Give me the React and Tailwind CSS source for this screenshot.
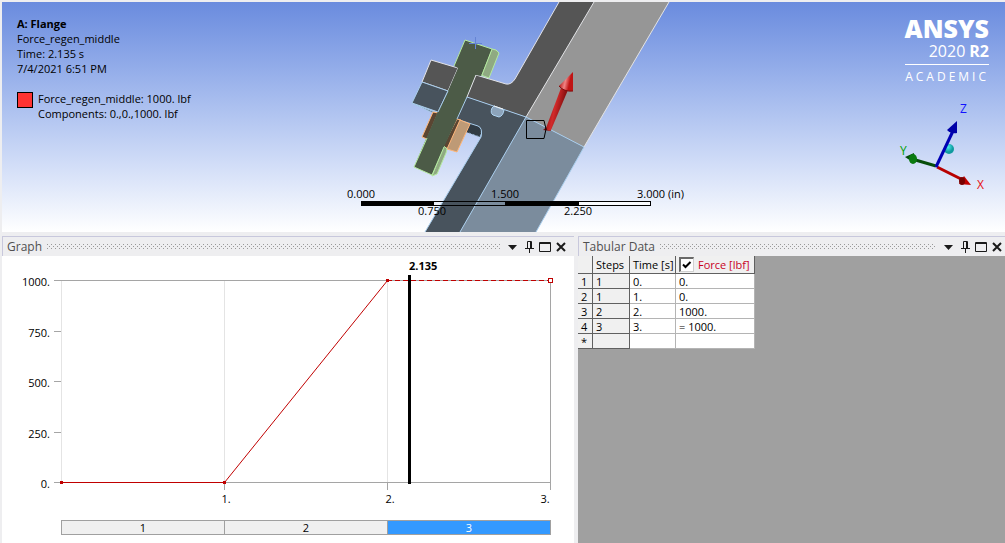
const STEPS = ['1', '2', '3'];
const ACTIVE_STEP = '3';

const ROWS = [
  { step: '1', time: '0.', force: '0.' },
  { step: '1', time: '1.', force: '0.' },
  { step: '2', time: '2.', force: '1000.' },
  { step: '3', time: '3.', force: '= 1000.' },
];

const Y_TICKS = [
  { label: '1000.', y: 281 },
  { label: '750.', y: 332 },
  { label: '500.', y: 382 },
  { label: '250.', y: 433 },
  { label: '0.', y: 483 },
];

const X_TICKS = [
  { label: '1.', x: 224, textX: 226 },
  { label: '2.', x: 387, textX: 390 },
  { label: '3.', x: 550, textX: 545 },
];

function Model() {
  return (
    <g strokeWidth="1" strokeLinejoin="round">
      {/* upper pipe */}
      <path d="M594 2H669L584 147L526 117Z" fill="#969696" />
      <path d="M559 2H594L526 117L467 97L476 75L506 84Q511 85 515 79Z" fill="#555555" />
      <path d="M594 2L526 117M669 2L584 147" stroke="#e4e4e4" fill="none" />
      <path d="M559 2L515 79Q511 85 506 84L476 75" stroke="#e4e4e8" fill="none" />

      {/* lower pipe */}
      <path d="M526 117L584 147L536 232H460Z" fill="#7b8c9d" />
      <path d="M466 121L478 125L482 130L480 137L466 132Z" fill="#313b44" stroke="#8fb0cc" strokeDasharray="2 2" />
      <path d="M467 97L526 117L460 232H425L481 137Q483 128 478 126L456 119Z" fill="#48535d" />
      <path d="M467 97L526 117L584 147L536 232M526 117L460 232M425 232L481 137Q483 128 478 126L456 119" stroke="#a9cdec" fill="none" />
      <path d="M492 108Q490 113 493 115L499 117Q503 116 504 110L494 106Z" fill="#8da4bb" stroke="#b0d5f3" />
      <path d="M494 106L503 109" stroke="#f0f0f0" />

      {/* left flange */}
      <path d="M431 60L458 68L448 91L422 82Z" fill="#555555" stroke="#e4e4e8" />
      <path d="M412 103L431 112L437 113Z" fill="#28323a" stroke="#a9cdec" />
      <path d="M422 82L448 91L438 112L412 103Z" fill="#48535d" stroke="#a9cdec" />

      {/* nut */}
      <path d="M433 112L438 113L427 139L422 137Z" fill="#5b4532" stroke="#ffb67a" />
      <path d="M457 119L461 120L448 149L443 146Z" fill="#5b4532" stroke="#ffb67a" />
      <path d="M460 120L470 124L457 152L447 149Z" fill="#be9a76" stroke="#ffb67a" />

      {/* bolt */}
      <path d="M492 49L496 50L499 53L489 78L481 75Z" fill="#8faa82" stroke="#b5eaa0" />
      <path d="M444 146L447 149L446 153L437 174L432 176Z" fill="#8faa82" stroke="#b5eaa0" />
      <path d="M465 40L492 49L481 76L476 75L467 97L457 119L444 147L432 175L414 167L438 111L448 91L458 68L454 66Z" fill="#4c5b47" />
      <path d="M454 66L465 40L492 49L482 75M427 138L414 167L432 175L444 147" stroke="#b5eaa0" fill="none" />
      <path d="M476 75L467 97" stroke="#e4e4e8" />
      <path d="M467 97L457 119M448 91L438 112" stroke="#a9cdec" />
      <path d="M469 43.500H482M475.500 37V49" stroke="#6584d4" />
    </g>
  );
}

function ForceArrow() {
  return (
    <g>
      <path d="M543 130L548 126L551 131Z" fill="#7e0d0d" />
      <path d="M546 128L561 88L568 90L551 130Q548 132 546 128Z" fill="url(#shaft)" />
      <path d="M573 72L559 86Q564 92 573 91Z" fill="url(#cone)" />
      <path d="M559 86Q564 92 573 91" stroke="#7e0d0d" fill="none" />
      <path d="M526.500 120.500H544L546 129L544 138.500H526.500Z" stroke="#000" fill="none" />
    </g>
  );
}

function ScaleBar() {
  return (
    <g fill="#000" fontSize="11" textAnchor="middle">
      <rect x="361.500" y="201.500" width="289" height="4" fill="none" stroke="#000" />
      <rect x="579" y="202" width="71" height="3" fill="#fff" fillOpacity="0.7" />
      <rect x="361" y="201" width="73" height="5" />
      <rect x="505" y="201" width="74" height="5" />
      <text x="361" y="198">0.000</text>
      <text x="505" y="198">1.500</text>
      <text x="637" y="198" textAnchor="start">3.000 (in)</text>
      <text x="432" y="215">0.750</text>
      <text x="578" y="215">2.250</text>
    </g>
  );
}

function Triad() {
  return (
    <g fontSize="12">
      <path d="M936 166L912 159" stroke="#064d0a" strokeWidth="3" />
      <path d="M905 157L914 153V163Z" fill="#064d0a" />
      <ellipse cx="913" cy="159" rx="4" ry="5" fill="#0a7a10" />
      <path d="M937 167L961 179" stroke="#b80000" strokeWidth="3" />
      <path d="M971 185L964 176L959 184Z" fill="#c00000" />
      <ellipse cx="962" cy="181" rx="3" ry="4" fill="#780000" />
      <circle cx="949" cy="149" r="5" fill="url(#ball)" />
      <path d="M936 167L953 131" stroke="#0000b4" strokeWidth="3" />
      <path d="M957 121L947 130Q951 134 957 133Z" fill="#0000a8" />
      <text x="960" y="113" fill="#1212ff">Z</text>
      <text x="900" y="155" fill="#00a000">Y</text>
      <text x="977" y="189" fill="#e81010">X</text>
    </g>
  );
}

function Viewport() {
  return (
    <section className="relative bg-linear-to-b from-[#6a8bde] to-white">
      <svg viewBox="2 2 1003 230" className="block w-full" fontFamily="'Open Sans', 'Noto Sans', sans-serif">
        <defs>
          <linearGradient id="shaft" x1="0" y1="0" x2="1" y2="0.4">
            <stop offset="0.2" stopColor="#8e1212" />
            <stop offset="0.5" stopColor="#d32a2a" />
            <stop offset="0.8" stopColor="#8e1212" />
          </linearGradient>
          <linearGradient id="cone" x1="0" y1="0" x2="1" y2="0.3">
            <stop offset="0.2" stopColor="#b51818" />
            <stop offset="0.55" stopColor="#f08484" />
            <stop offset="0.85" stopColor="#c01414" />
          </linearGradient>
          <radialGradient id="ball" cx="0.4" cy="0.3">
            <stop offset="0" stopColor="#4cf0f0" />
            <stop offset="1" stopColor="#109a9e" />
          </radialGradient>
        </defs>
        <Model />
        <ForceArrow />
        <ScaleBar />
        <Triad />
      </svg>

      <div className="absolute left-[15px] top-[14px] text-[11px] leading-[15px] text-black">
        <h1 className="font-bold">A: Flange</h1>
        <p>Force_regen_middle</p>
        <p>Time: 2.135 s</p>
        <p>7/4/2021 6:51 PM</p>
        <div className="mt-[15px] flex gap-[5px]">
          <span className="mt-px size-4 border border-black bg-[#ff3333]" />
          <div>
            <p>Force_regen_middle: 1000. lbf</p>
            <p>Components: 0.,0.,1000. lbf</p>
          </div>
        </div>
      </div>

      <div className="absolute right-4 top-[12px] text-right text-white">
        <div className="text-[25px] font-extrabold leading-[28px]">ANSYS</div>
        <div className="flex justify-end gap-1 text-[16px] leading-[18px]">
          <span>2020</span>
          <b>R2</b>
        </div>
        <div className="mt-1 border-t border-white pt-[5px] text-[12px] leading-[14px] tracking-[3px]">ACADEMIC</div>
      </div>
    </section>
  );
}

function PanelHeader({ title, className }) {
  const id = `grip-${title.split(' ')[0]}`;
  return (
    <header className={`flex h-5 items-center border-l border-t border-[#c8c8dc] bg-[#eeeef0] pl-1 text-[#1a1a1a] ${className}`}>
      <h2 className="text-[12px] leading-4 text-[#505050]">{title}</h2>
      <svg className="mx-[5px] h-[5px] min-w-0 flex-1" aria-hidden="true">
        <defs>
          <pattern id={id} width="4" height="4" patternUnits="userSpaceOnUse">
            <path d="M0 0h1v1H0zM2 2h1v1H2z" fill="#999" />
          </pattern>
        </defs>
        <rect width="100%" height="5" fill={`url(#${id})`} />
      </svg>
      <button type="button" aria-label="Menu" className="flex w-4 justify-center">
        <svg width="10" height="12"><path d="M0 4H9L4.500 9Z" fill="currentColor" /></svg>
      </button>
      <button type="button" aria-label="Pin" className="flex w-4 justify-center">
        <svg width="9" height="12" fill="none" stroke="currentColor">
          <path d="M2.500 7V0.500H6.500V7M0 7.500H9M4.500 8V12M5.500 1V7" />
        </svg>
      </button>
      <button type="button" aria-label="Maximize" className="flex w-4 justify-center">
        <svg width="12" height="12" fill="none" stroke="currentColor">
          <path d="M0.500 1.500H11.500V10.500H0.500ZM0 2.500H12" />
        </svg>
      </button>
      <button type="button" aria-label="Close" className="flex w-4 justify-center">
        <svg width="10" height="12" fill="none" stroke="currentColor" strokeWidth="2">
          <path d="M1 2L9 10M9 2L1 10" />
        </svg>
      </button>
    </header>
  );
}

function Chart() {
  return (
    <svg viewBox="2 256 572 258" className="block w-full" fontFamily="'Open Sans', 'Noto Sans', sans-serif" fontSize="11">
      <g shapeRendering="crispEdges" fill="none">
        <path d="M61.500 281V483M224.500 281V483M387.500 281V483" stroke="#e4e4e4" />
        {Y_TICKS.map((t) => (
          <path key={t.label} d={`M54 ${t.y - 0.5}H61`} stroke="#a5a5a5" />
        ))}
        <path d="M54 280.500H550.500V490M54 482.500H550M224.500 483V490M387.500 483V490" stroke="#a5a5a5" />
      </g>

      {Y_TICKS.map((t) => (
        <text key={t.label} x="50" y={t.y + 5} textAnchor="end">{t.label}</text>
      ))}
      {X_TICKS.map((t) => (
        <text key={t.label} x={t.textX} y="503" textAnchor="middle">{t.label}</text>
      ))}

      <path d="M61 482.500H224.500L387.500 280.500" stroke="#c00000" fill="none" />
      <path d="M387 280.500H550" stroke="#c00000" strokeDasharray="5 3" />
      <g fill="#c00000">
        <rect x="60" y="481" width="3" height="3" />
        <rect x="223" y="481" width="3" height="3" />
        <rect x="386" y="279" width="3" height="3" />
      </g>
      <rect x="548.500" y="278.500" width="4" height="4" fill="#fff" stroke="#c00000" />

      <rect x="408" y="275" width="3" height="209" />
      <text x="409" y="270" fontWeight="bold">2.135</text>
    </svg>
  );
}

function GraphPanel() {
  return (
    <section className="min-w-0 flex-[572] bg-white">
      <PanelHeader title="Graph" className="pr-[5px]" />
      <Chart />
      <div className="ml-[59px] mr-[23px] mt-[6px] flex border-l border-[#a0a0a0]">
        {STEPS.map((s) => (
          <button
            key={s}
            type="button"
            className={`h-[15px] flex-1 border-y border-r border-[#a0a0a0] text-[11px] leading-[13px] ${
              s === ACTIVE_STEP ? 'bg-[#3399ff] text-white' : 'bg-[#f0f0f0] text-black'
            }`}
          >
            {s}
          </button>
        ))}
      </div>
    </section>
  );
}

function TabularPanel() {
  const head = 'border-b border-r border-[#606060] bg-[#f0f0f0] p-0 font-normal';
  const cell = 'border-b border-r border-[#b4b4b4] bg-white pb-0 pl-[3px] pr-0 pt-px';
  return (
    <section className="min-w-0 flex-[427] bg-[#a0a0a0]">
      <PanelHeader title="Tabular Data" className="pr-0" />
      <table className="w-[177px] table-fixed border-separate border-spacing-0 text-left text-[11px] leading-[13px] text-black">
        <colgroup>
          <col className="w-[15px]" />
          <col className="w-[37px]" />
          <col className="w-[46px]" />
          <col className="w-[79px]" />
        </colgroup>
        <thead>
          <tr className="h-[18px] whitespace-nowrap">
            <th className={head} />
            <th className={`${head} pl-[3px]`}>Steps</th>
            <th className={`${head} pl-[3px]`}>Time [s]</th>
            <th className={head}>
              <label className="flex items-center gap-1 pl-[3px] text-[#c8001e]">
                <span className="grid">
                  <input
                    type="checkbox"
                    defaultChecked
                    className="peer col-start-1 row-start-1 size-[15px] appearance-none border-b border-l-2 border-r border-t-2 border-b-[#d0d0d0] border-l-[#696969] border-r-[#d0d0d0] border-t-[#696969] bg-white"
                  />
                  <svg
                    viewBox="0 0 15 15"
                    className="pointer-events-none invisible col-start-1 row-start-1 size-[15px] peer-checked:visible"
                  >
                    <path d="M4 7.500L6.500 10L11.500 5" stroke="#000" strokeWidth="2" fill="none" />
                  </svg>
                </span>
                Force [lbf]
              </label>
            </th>
          </tr>
        </thead>
        <tbody>
          {ROWS.map((r, i) => (
            <tr key={i} className="h-[15px]">
              <th className={`${head} pl-[3px] pt-px`}>{i + 1}</th>
              <td className={`${head} pl-[3px] pt-px`}>{r.step}</td>
              <td className={cell}>{r.time}</td>
              <td className={cell}>{r.force}</td>
            </tr>
          ))}
          <tr className="h-[15px]">
            <th className={`${head} pl-[3px] pt-px`}>*</th>
            <td className={head} />
            <td className={cell} />
            <td className={cell} />
          </tr>
        </tbody>
      </table>
    </section>
  );
}

export default function App() {
  return (
    <div className="flex min-h-screen flex-col gap-1 bg-[#eeeef0] pl-[2px] pt-[2px] font-['Open_Sans','Noto_Sans',sans-serif]">
      <Viewport />
      <main className="flex flex-1 gap-1">
        <GraphPanel />
        <TabularPanel />
      </main>
    </div>
  );
}
